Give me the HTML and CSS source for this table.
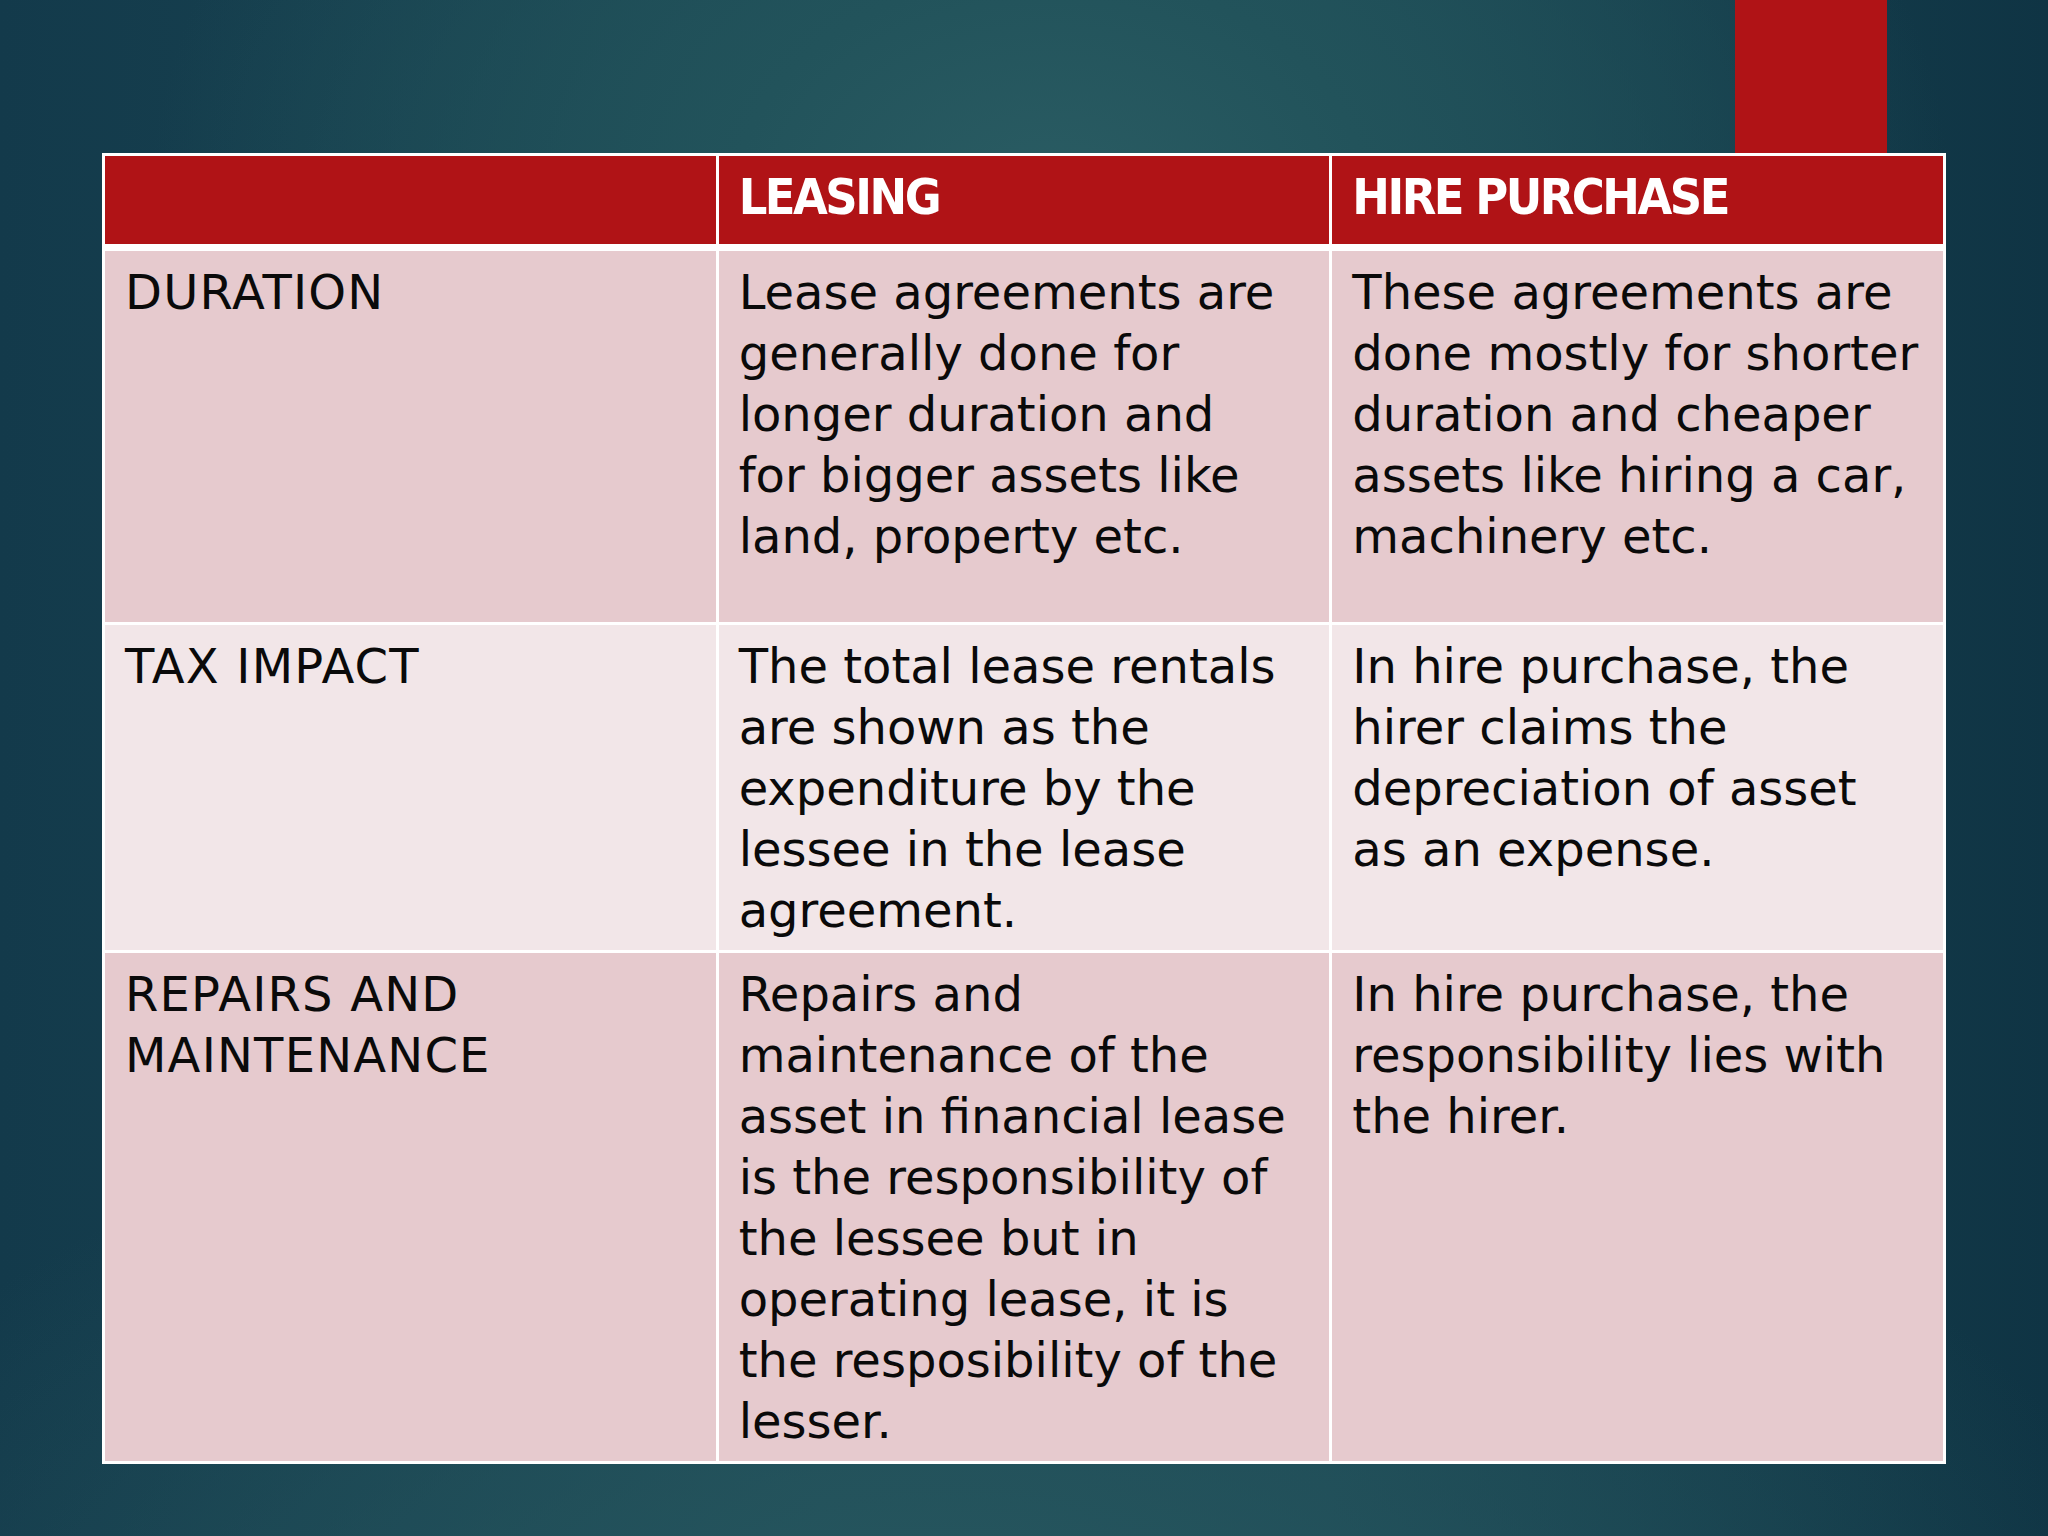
FILE: index.html
```html
<!DOCTYPE html>
<html>
<head>
<meta charset="utf-8">
<link rel="stylesheet" href="styles.css">
</head>
<body>
<div class="slide">
  <div class="accent"></div>
  <div class="table">
    <div class="cell head"></div>
    <div class="cell head">LEASING</div>
    <div class="cell head">HIRE PURCHASE</div>

    <div class="cell odd label">DURATION</div>
    <div class="cell odd">Lease agreements are<br>generally done for<br>longer duration and<br>for bigger assets like<br>land, property etc.</div>
    <div class="cell odd">These agreements are<br>done mostly for shorter<br>duration and cheaper<br>assets like hiring a car,<br>machinery etc.</div>

    <div class="cell even label">TAX IMPACT</div>
    <div class="cell even">The total lease rentals<br>are shown as the<br>expenditure by the<br>lessee in the lease<br>agreement.</div>
    <div class="cell even">In hire purchase, the<br>hirer claims the<br>depreciation of asset<br>as an expense.</div>

    <div class="cell odd label">REPAIRS AND<br>MAINTENANCE</div>
    <div class="cell odd">Repairs and<br>maintenance of the<br>asset in financial lease<br>is the responsibility of<br>the lessee but in<br>operating lease, it is<br>the resposibility of the<br>lesser.</div>
    <div class="cell odd">In hire purchase, the<br>responsibility lies with<br>the hirer.</div>
  </div>
</div>
</body>
</html>
```
FILE: styles.css
```css
html, body {
  margin: 0;
  padding: 0;
}
body {
  width: 2048px;
  height: 1536px;
  overflow: hidden;
}
.slide {
  width: 2048px;
  height: 1536px;
  box-sizing: border-box;
  background:
    radial-gradient(ellipse 900px 650px at 1050px 200px, #2a5c63 0%, #22535b 35%, rgba(20,60,72,0) 100%),
    radial-gradient(ellipse 1200px 600px at 950px 1650px, #27575f 0%, rgba(20,60,72,0) 100%),
    linear-gradient(90deg, #133a4b 0%, #1b4854 40%, #1a4653 65%, #0f3444 100%);
  font-family: "DejaVu Sans", "Liberation Sans", sans-serif;
}
.accent {
  margin-left: 1735px;
  width: 152px;
  height: 153px;
  background: #b01316;
}
.table {
  margin-left: 102px;
  width: 1844px;
  height: 1311px;
  box-sizing: border-box;
  background: #ffffff;
  padding: 3px;
  display: grid;
  grid-template-columns: 1fr 1fr 1fr;
  grid-template-rows: 92px 371px 325px 1fr;
  column-gap: 3px;
  row-gap: 3px;
}
.cell {
  padding: 11px 20px 0 20px;
  font-size: 48px;
  line-height: 61px;
  color: #0a0a0a;
  white-space: nowrap;
  overflow: hidden;
}
.label {
  letter-spacing: 1.2px;
}
.head {
  background: #b01316;
  color: #ffffff;
  font-family: "DejaVu Sans Condensed", "DejaVu Sans", sans-serif;
  font-weight: bold;
  font-size: 50px;
  letter-spacing: -2.5px;
  padding-top: 0;
  padding-bottom: 6px;
  display: flex;
  align-items: center;
  margin-bottom: 4px;
}
.odd {
  background: #e6cace;
}
.even {
  background: #f2e6e8;
}
```
